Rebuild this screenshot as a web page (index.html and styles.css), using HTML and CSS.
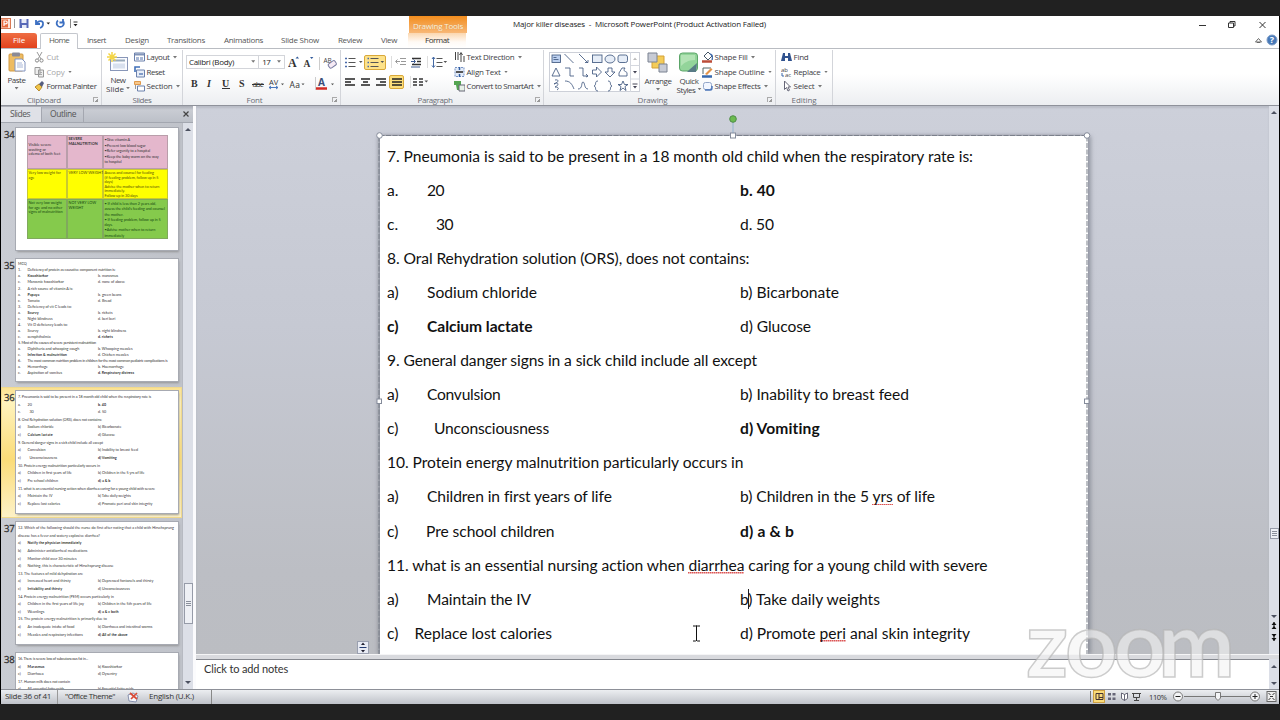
FILE: index.html
```html
<!DOCTYPE html>
<html lang="en">
<head>
<meta charset="utf-8">
<title>Major killer diseases - Microsoft PowerPoint</title>
<link rel="stylesheet" href="styles.css">
</head>
<body>
<div class="screen">
<div class="app">
  <header class="titlebar">
    <div class="quick">
      <svg width="78" height="15" viewBox="0 0 78 15"><rect x="0" y="2.500" width="9.500" height="10" fill="#fbe3d8" stroke="#d97a55"/><rect x="1" y="3.500" width="6" height="8" fill="#e8693c"/><path d="M3 10V5h1.800a1.300 1.300 0 0 1 0 2.800H3" fill="none" stroke="#fff" stroke-width="1.200"/><path d="M13.500 3v9" stroke="#999"/><path d="M18.500 3h9v9h-9z" fill="#5768b8"/><path d="M20.500 3h5v4h-5zM21 9h4.500v3H21z" fill="#e9ecf8"/><path d="M35 4v4h4M35.500 8c2-4 7-3.500 6.500 0c0 2-1.500 3.500-3 4" fill="none" stroke="#3d70c2" stroke-width="1.800"/><path d="M45.500 6.500h3.600l-1.800 2z" fill="#222"/><path d="M57 4.500a3.600 3.600 0 1 0 4.500 0M62 3v3.500h-3.500" fill="none" stroke="#3d70c2" stroke-width="1.800"/><path d="M69.500 3v9" stroke="#888"/><path d="M72.500 6h4" stroke="#333"/><path d="M72.500 8h4l-2 2.200z" fill="#222"/></svg>
    </div>
    <div class="context"><span data-w="50">Drawing Tools</span></div>
    <div class="doc"><span data-w="253">Major killer diseases  -  Microsoft PowerPoint (Product Activation Failed)</span></div>
    <svg class="winbtns" width="72" height="15" viewBox="0 0 72 15"><path d="M1 9.500h7" stroke="#333"/><path d="M30.500 7h5v4.500h-5zM32 6.800V5.500h5v4.500h-1.300" fill="none" stroke="#333"/><path d="M61.500 6l6 6m0-6l-6 6" stroke="#333"/></svg>
  </header>
  <nav class="tabs">
    <div class="file"><span data-w="12">File</span></div>
    <div class="tab on"><span data-w="20">Home</span></div>
    <div class="tab t1"><span data-w="19">Insert</span></div>
    <div class="tab t2"><span data-w="24">Design</span></div>
    <div class="tab t3"><span data-w="38">Transitions</span></div>
    <div class="tab t4"><span data-w="39">Animations</span></div>
    <div class="tab t5"><span data-w="38">Slide Show</span></div>
    <div class="tab t6"><span data-w="24">Review</span></div>
    <div class="tab t7"><span data-w="16">View</span></div>
    <div class="tab fmt"><span data-w="24">Format</span></div>
    <svg class="help" width="26" height="14" viewBox="0 0 26 14"><path d="M2.500 9L5.500 5.500L8.500 9zM4 9.500h3" fill="none" stroke="#666"/><circle cx="19" cy="7" r="5" fill="#4779b8" stroke="#7d9cc6"/><text x="16.800" y="10.300" font-size="9" font-weight="bold" fill="#fff">?</text></svg>
  </nav>
  <section class="ribbon">
    <div class="group g1">
      <div class="gbody">
        <div class="big paste"><svg width="20" height="20" viewBox="0 0 20 20"><rect x="2" y="2" width="14" height="17" rx="1" fill="#eebc62" stroke="#d29a43"/><rect x="5" y="0.500" width="8" height="4" rx="1" fill="#8a8a96"/><path d="M8 7h7l3 3v9H8z" fill="#fff" stroke="#8294c0"/><path d="M10 11h5M10 13h6M10 15h6" stroke="#aab8d8"/></svg><span data-w="18">Paste</span><i class="dd"></i></div>
        <div class="rows">
          <div class="row off"><svg width="11" height="12" viewBox="0 0 11 12"><path d="M3 1l4 7M8 1L4 8" stroke="#999"/><circle cx="3" cy="9.500" r="1.600" fill="none" stroke="#888"/><circle cx="7.500" cy="9.500" r="1.600" fill="none" stroke="#888"/></svg><span data-w="12">Cut</span></div>
          <div class="row off"><svg width="11" height="12" viewBox="0 0 11 12"><path d="M1 1.500h5v7H1zM4.500 4h5v7h-5z" fill="#eee" stroke="#999"/><path d="M6 6.500h2M6 8.500h2" stroke="#aaa"/></svg><span data-w="18">Copy</span><i class="dd"></i></div>
          <div class="row"><svg width="11" height="12" viewBox="0 0 11 12"><path d="M1 7l4-3 3 3-3 4z" fill="#f0c54a" stroke="#b98b2d"/><path d="M5 4l3-3 2 2-2 4z" fill="#555e80"/></svg><span data-w="50">Format Painter</span></div>
        </div>
      </div>
      <div class="glabel"><span data-w="34">Clipboard</span></div><b class="launch"></b>
    </div>
    <div class="group g2">
      <div class="gbody">
        <div class="big new"><svg width="22" height="20" viewBox="0 0 22 20"><rect x="3.500" y="5.500" width="17" height="13" fill="#fafbff" stroke="#8896b8"/><path d="M6 8.500h12" stroke="#9ab" stroke-width="2"/><rect x="6" y="11.500" width="12" height="5" fill="#d8e0ee"/><path d="M5 0v10M0 5h10M1.500 1.500l7 7M8.500 1.500l-7 7" stroke="#f4d545" stroke-width="1.500"/></svg><span data-w="15">New</span><div class="two"><span data-w="18">Slide</span><i class="dd"></i></div></div>
        <div class="rows">
          <div class="row"><svg width="11" height="12" viewBox="0 0 11 12"><path d="M.5 2h10v8H.5z" fill="#fff" stroke="#6b80ac"/><path d="M1 3.500h9" stroke="#8294b8" stroke-width="2"/><path d="M2 6h3v3H2zM6 6h3v3H6z" fill="#a9b8d6"/></svg><span data-w="23">Layout</span><i class="dd"></i></div>
          <div class="row"><svg width="11" height="12" viewBox="0 0 11 12"><path d="M2.500 4h8v7h-8z" fill="#e7edf8" stroke="#6b80ac"/><path d="M1 6V1h5" fill="none" stroke="#3f6fb8" stroke-width="1.600"/><path d="M5 7h4v2H5z" fill="#819bc8"/></svg><span data-w="18">Reset</span></div>
          <div class="row"><svg width="11" height="12" viewBox="0 0 11 12"><path d="M.5 1.500h6v3h-6z" fill="#f7c78a" stroke="#e0994b"/><path d="M3.500 6h7v5h-7z" fill="#fff" stroke="#6b80ac"/><path d="M1.500 5v4" stroke="#999"/></svg><span data-w="26">Section</span><i class="dd"></i></div>
        </div>
      </div>
      <div class="glabel"><span data-w="19">Slides</span></div>
    </div>
    <div class="group g3">
      <div class="fontline">
        <div class="combo c1"><span data-w="45">Calibri (Body)</span><i class="dd"></i></div>
        <div class="combo c2"><span data-w="8">17</span><i class="dd"></i></div>
        <svg width="52" height="16" viewBox="0 0 52 16"><g font-family="Liberation Serif" font-weight="bold" fill="#333"><text x="0" y="12" font-size="12">A</text><text x="15.500" y="12" font-size="9.500">A</text></g><path d="M7.500 3.500l1.800-2 1.800 2zM22 2h3.400l-1.700 2z" fill="#335b9b"/><path d="M31.500 2v13" stroke="#ccc"/><text x="35.500" y="7.500" font-size="6.500" fill="#444">AB</text><rect x="40" y="7" width="8" height="5" rx="1.500" transform="rotate(-35 44 9)" fill="#f6eaf5" stroke="#777ba0"/></svg>
      </div>
      <div class="fontbuttons">
        <svg width="152" height="18" viewBox="0 0 152 18"><g font-family="Liberation Serif" font-weight="bold" font-size="10" fill="#333"><text x="4" y="11">B</text><text x="20" y="11" font-style="italic">I</text><text x="35" y="11">U</text><text x="52" y="11">S</text></g><path d="M35 12.500h8" stroke="#333"/><text x="65.500" y="11" font-size="8" fill="#333" textLength="11">abc</text><path d="M65 8.500h12" stroke="#333"/><text x="82" y="8.500" font-size="7.500" fill="#333">AV</text><path d="M82 11.500h9M84 10l-2 1.500 2 1.500M89 10l2 1.500-2 1.500" fill="none" stroke="#4a78bd"/><path d="M94 7.500h3l-1.500 1.800zM114.500 7.500h3l-1.500 1.800zM144 7.500h3l-1.500 1.800z" fill="#555"/><text x="102.500" y="11.500" font-size="8.500" fill="#333" textLength="10.500">Aa</text><path d="M128.500 1v13" stroke="#ccc"/><text x="131" y="10" font-size="10" font-weight="bold" fill="#394f7a">A</text><path d="M129 12.500h11" stroke="#d22c24" stroke-width="2.500"/></svg>
      </div>
      <div class="glabel"><span data-w="16">Font</span></div><b class="launch"></b>
    </div>
    <div class="group g4">
      <div class="gbody">
        <svg class="para" width="108" height="44" viewBox="0 0 108 44">
          <rect x="21.500" y="5.500" width="21" height="14" rx="1.500" fill="#fde28a" stroke="#d9a83a"/><rect x="46.500" y="25.500" width="14" height="13" rx="1.500" fill="#fddf7c" stroke="#d9a83a"/>
          <path d="M5.500 8.500h7M5.500 12.500h7M5.500 16.500h7M27.500 8.500h8M27.500 12.500h8M27.500 16.500h8" stroke="#555"/><path d="M2 8.500h2M2 12.500h2M2 16.500h2M24.500 8.500h1.500M24.500 12.500h1.500M24.500 16.500h1.500" stroke="#4a6aaa" stroke-width="1.500"/>
          <path d="M16 11h3.600l-1.800 2zM37.500 11h3.600l-1.800 2zM100.500 11h3.600l-1.800 2zM81.500 30.500h3.600l-1.800 2z" fill="#555"/>
          <path d="M57 8.500h6M58 11.500h5M57 14.500h6M53 11.500h4M54.500 9.500l-2 2 2 2" fill="none" stroke="#999"/><path d="M69 8.500h9M74 11.500h4M69 14.500h9" stroke="#333" stroke-width="1.500"/><path d="M68 11.500h4M70.500 9.500l2 2-2 2M68 17h9" fill="none" stroke="#3d5a92"/>
          <path d="M48.500 6v12M84.500 6v12M67.500 26v12" stroke="#ddd"/><path d="M93.500 8.500h6M93.500 12.500h6M93.500 16.500h6" stroke="#555"/><path d="M90.500 7v10M89 9l1.500-2L92 9M89 15.500l1.500 2 1.500-2" fill="none" stroke="#456aa5"/>
          <path d="M2 29h10M2 32h6M2 35h10M18 29h9M20 32h5M18 35h9M33 29h10M37 32h6M33 35h10M49 29h10M49 32h10M49 35h10" stroke="#222" stroke-width="1.600"/><path d="M70 29h4M76 29h4M70 32h4M76 32h4M70 35h4M76 35h4" stroke="#333" stroke-width="1.500"/></svg>
        <div class="rows">
          <div class="row"><svg width="11" height="12" viewBox="0 0 11 12"><path d="M1.500 1v8M4 1v8M10 5v6" stroke="#444"/><path d="M7 11V2M5.500 4L7 1.500 8.500 4" fill="none" stroke="#444"/></svg><span data-w="48">Text Direction</span><i class="dd"></i></div>
          <div class="row"><svg width="11" height="12" viewBox="0 0 11 12"><path d="M1 1.500h9v9H1z" fill="#e4ecf9" stroke="#7793c4" stroke-dasharray="2 1"/><path d="M2 6h7" stroke="#555" stroke-width="2"/><path d="M5.500 1v3M5.500 8v3" stroke="#2f5da4" stroke-width="1.500"/></svg><span data-w="34">Align Text</span><i class="dd"></i></div>
          <div class="row"><svg width="11" height="12" viewBox="0 0 11 12"><path d="M0 1h7v4H0zM2 5h4l4 5H3z" fill="#54a552"/><path d="M5 5h6v6H5z" fill="#e7f1e7" stroke="#667"/></svg><span data-w="67">Convert to SmartArt</span><i class="dd"></i></div>
        </div>
      </div>
      <div class="glabel"><span data-w="35">Paragraph</span></div><b class="launch"></b>
    </div>
    <div class="group g5">
      <div class="gbody">
        <svg class="gallery" width="92" height="40" viewBox="0 0 92 40"><rect x=".5" y=".5" width="90" height="39" fill="#fff" stroke="#cdd0d8"/><path d="M81.500 0v40M81.500 13.500h9M81.500 27h9" stroke="#d5d8df"/>
          <g fill="none" stroke="#41597f" stroke-width=".85"><rect x="3" y="3" width="8.500" height="7.500" fill="#bcd0ef"/><path d="M4.500 5.500h3M4.500 7.500h5M15.500 2l9 9M30 2l9 9M36 10.500h3V8"/><rect x="43.500" y="3" width="9.500" height="7.500" fill="#e6edf7"/><ellipse cx="61" cy="7" rx="5" ry="4" fill="#e6edf7"/><rect x="69" y="3" width="9.500" height="7.500" rx="2" fill="#e6edf7"/><path d="M3 24l4-8 4 8zM16 16h5v8h4M30 16h4v8h5l-2-2m2 2l-2 1M43.500 18h4v-3l5 5-5 5v-3h-4zM59 16h4v4h3l-5 5-5-5h3zM70 24v-3l3-5h3c-3 4 2 3 2 5v3zM6 28c5-1 3 3-1 4 4-3 6 1 1 3 4 0 4 2 2 3M16 29c5 0 7 3 9 8M29 37c5 0 3-7 5-7s1 7 5 7M49 29c-4 0-1 4-4 5 3 1 0 5 4 5M59 29c4 0 1 4 4 5-3 1 0 5-4 5M74 29l1.500 3.500h3.500l-3 2 1 4-3-2.500-3 2.500 1-4-3-2h3.500z"/></g><path d="M84 19h4l-2 2.500zM84 34h4l-2 2.500z" fill="#445"/><path d="M83.500 32h5" stroke="#445"/><path d="M84 8h4l-2-2.500z" fill="#bbb"/></svg>
        <div class="big arr"><svg width="22" height="21" viewBox="0 0 22 21"><path d="M5 4h12v12H5z" fill="#f4cc58" stroke="#d5a136"/><path d="M1 1h9v9H1zM12 12h8v8h-8z" fill="#c7cbd5" stroke="#7b8291"/></svg><span data-w="27">Arrange</span><i class="dd"></i></div>
        <div class="big qs"><svg width="20" height="21" viewBox="0 0 20 21"><rect x=".5" y="1" width="18" height="18" rx="3" fill="#93d49a" stroke="#5ba568"/><path d="M2 3h14v5C9 8 5 11 2 14z" fill="#b3e3b5"/><path d="M18 11l-8 7-2 2h9z" fill="#587b86"/></svg><span data-w="19">Quick</span><div class="two"><span data-w="19">Styles</span><i class="dd"></i></div></div>
        <div class="rows">
          <div class="row"><svg width="11" height="12" viewBox="0 0 11 12"><path d="M2 5l4-4 4 4-4 4z" fill="#fff" stroke="#456"/><path d="M8 3c3 1 3 3 2 6" fill="none" stroke="#456fae" stroke-width="1.500"/><path d="M0 10.500h10" stroke="#bb4c39" stroke-width="2.500"/></svg><span data-w="33">Shape Fill</span><i class="dd"></i></div>
          <div class="row"><svg width="11" height="12" viewBox="0 0 11 12"><path d="M1 8V2h8" fill="none" stroke="#566"/><path d="M3 8l6-6 1.500 1.500L5 9z" fill="#e59448"/><path d="M0 10.500h10" stroke="#3768ad" stroke-width="2.500"/></svg><span data-w="50">Shape Outline</span><i class="dd"></i></div>
          <div class="row"><svg width="11" height="12" viewBox="0 0 11 12"><rect x="1.500" y="2.500" width="8" height="7" rx="2" fill="#f2f6ff" stroke="#92a5c8"/><path d="M3 10h5c2 0 2-1 2-4" fill="none" stroke="#4a74b8" stroke-width="1.500"/></svg><span data-w="46">Shape Effects</span><i class="dd"></i></div>
        </div>
      </div>
      <div class="glabel"><span data-w="30">Drawing</span></div><b class="launch"></b>
    </div>
    <div class="group g6">
      <div class="gbody"><div class="rows">
        <div class="row"><svg width="11" height="12" viewBox="0 0 11 12"><path d="M2 2h2v3h3V2h2l2 8H7V7H4v3H0z" fill="#31538f"/></svg><span data-w="15">Find</span></div>
        <div class="row"><svg width="11" height="12" viewBox="0 0 11 12"><text x="0" y="5.500" font-size="6" fill="#444">ab</text><text x="4" y="11" font-size="6" fill="#444">ac</text><path d="M1 7v3h2" fill="none" stroke="#3b67a8"/></svg><span data-w="27">Replace</span><i class="dd"></i></div>
        <div class="row"><svg width="11" height="12" viewBox="0 0 11 12"><path d="M3.500 1v8.500l2-2 1.500 3.500 1.500-.8L7 7h2.500z" fill="#fff" stroke="#667"/></svg><span data-w="21">Select</span><i class="dd"></i></div>
      </div></div>
      <div class="glabel"><span data-w="25">Editing</span></div>
    </div>
  </section>
  <main class="work">
    <aside class="pane">
      <div class="panetabs"><div class="ptab pon"><span data-w="20">Slides</span></div><div class="ptab"><span data-w="26">Outline</span></div><svg width="8" height="8" viewBox="0 0 8 8"><path d="M1.500 1.500l5 5M6.500 1.500l-5 5" stroke="#444" stroke-width="1.200"/></svg></div>
      <div class="panebody">
        <div class="list" id="list"></div>
        <div class="vbar"><i class="up"></i><div class="thumbgrip"></div><i class="down"></i></div>
      </div>
    </aside>
    <div class="stage">
      <div class="canvas">
        <div class="desk">
          <svg class="fit" width="12" height="13" viewBox="0 0 12 13"><rect x=".5" y=".5" width="11" height="12" fill="#e8ebf4" stroke="#9aa0b0"/><path d="M2.500 6.500h7" stroke="#223a70"/><path d="M6 1.500l2 2.500H4zM6 11.500L4 9h4z" fill="#223"/></svg>
          <article class="slide">
            <p><span data-w="586">7. Pneumonia is said to be present in a 18 month old child when the respiratory rate is:</span></p>
            <p class="q"><span>a.</span><span data-w="17">20</span><b data-w="35">b. 40</b></p>
            <p class="q"><span>c.</span><span class="in9" data-w="17">30</span><span data-w="34">d. 50</span></p>
            <p><span data-w="363">8. Oral Rehydration solution (ORS), does not contains:</span></p>
            <p class="q"><span>a)</span><span data-w="110">Sodium chloride</span><span data-w="99">b) Bicarbonate</span></p>
            <p class="q"><b>c)</b><b data-w="105.500">Calcium lactate</b><span data-w="71">d) Glucose</span></p>
            <p><span data-w="370">9. General danger signs in a sick child include all except</span></p>
            <p class="q"><span>a)</span><span data-w="73.500">Convulsion</span><span data-w="169">b) Inability to breast feed</span></p>
            <p class="q"><span>c)</span><span class="in7" data-w="115">Unconsciousness</span><b data-w="80">d) Vomiting</b></p>
            <p><span data-w="357">10. Protein energy malnutrition particularly occurs in</span></p>
            <p class="q"><span>a)</span><span data-w="184.500">Children in first years of life</span><span data-w="195">b) Children in the 5 <u>yrs</u> of life</span></p>
            <p class="q"><span>c)</span><span class="pre" data-w="128.500">Pre school children</span><b data-w="54">d) a &amp; b</b></p>
            <p><span data-w="601">11. what is an essential nursing action when <u>diarrhea</u> caring for a young child with severe</span></p>
            <p class="q"><span>a)</span><span data-w="104">Maintain the IV</span><span data-w="140">b) Take daily weights</span></p>
            <p class="q"><span>c)</span><span class="rep" data-w="137.500">Replace lost calories</span><span data-w="230">d) Promote <u>peri</u> anal skin integrity</span></p>
            <svg class="sel" width="716" height="545" viewBox="0 0 716 545"><path d="M4 545V25.500h708V545" fill="none" stroke="#7b808b" stroke-dasharray="5 1.500"/><path d="M358 12v13" stroke="#93b4d0"/><circle cx="358" cy="9" r="3.300" fill="#6cbb50" stroke="#4f8d48"/><g fill="#fff" stroke="#858c9b"><circle cx="4.500" cy="25.500" r="2.800"/><circle cx="712" cy="25.500" r="2.800"/><rect x="355.500" y="23" width="5" height="5"/><rect x="2" y="289" width="4.500" height="4.500"/><rect x="709.500" y="289" width="4.500" height="4.500"/></g><path d="M373.500 479v20" stroke="#222"/><path d="M318 516h2.500l1-.5 1 .5h2.500M321.500 516v15M318 531h2.500l1-.5 1 .5h2.500" fill="none" stroke="#111"/></svg>
          </article>
        </div>
        <div class="vbar main"><i class="up"></i><div class="thumbgrip"></div><i class="down"></i><svg width="10" height="26" viewBox="0 0 10 26"><path d="M2.500 7l2.500-3 2.500 3zM2.500 11L5 8l2.500 3zM2.500 16h5L5 19zM2.500 20h5L5 23z" fill="#111"/><path d="M5 4v7M5 16v7" stroke="#111"/></svg></div>
      </div>
      <div class="notes"><span data-w="84">Click to add notes</span><div class="vbar nb"><i class="up"></i><i class="down"></i></div></div>
      <svg class="mark" width="220" height="70" viewBox="0 0 220 70"><text x="6 45 93.500 138" y="57.500">zoom</text></svg>
    </div>
  </main>
  <footer class="status">
    <div class="s1"><span data-w="46">Slide 36 of 41</span></div>
    <div class="s2"><span data-w="50">"Office Theme"</span></div>
    <svg width="12" height="12" viewBox="0 0 12 12"><path d="M1 4l5-2 5 3-2 6-7-1z" fill="#f5f6fb" stroke="#8791ad"/><path d="M3 2l7 6M10 2L4 8" stroke="#d84b37" stroke-width="1.700"/></svg>
    <div class="s3"><span data-w="45">English (U.K.)</span></div>
    <svg class="views" width="189" height="15" viewBox="0 0 189 15"><path d="M.5 2v11" stroke="#777"/><rect x="3.500" y="1.500" width="11" height="12" fill="#fbdc7a" stroke="#cda043"/><path d="M6 4.500h7v6H6zM9 4.500v6M9 8.500h4" fill="none" stroke="#433"/><path d="M18 4h3v2.500h-3zM22.500 4h3v2.500h-3zM18 8.500h3V11h-3zM22.500 8.500h3V11h-3z" fill="#667"/><path d="M31.500 4l3 1.500v6l-3-2zM37.500 4l-3 1.500v6l3-2z" fill="#fff" stroke="#667"/><path d="M42 4.500h9M43.500 5v3.500h6V5M46.500 9v2.500M44 11.500h5" fill="none" stroke="#444"/><text x="59" y="10.500" font-size="7.500" fill="#333" textLength="18">110%</text><g fill="#f3f4f6" stroke="#777"><path d="M94 7.500h66"/><circle cx="88" cy="7.500" r="4.500"/><circle cx="165" cy="7.500" r="4.500"/><path d="M125.500 3.500h5V9l-2.500 2.500L125.500 9z"/></g><path d="M85.500 7.500h5M162.500 7.500h5M165 5v5" stroke="#222"/><rect x="177" y="2.500" width="9" height="10" fill="#eee" stroke="#666"/><path d="M178.500 4l2 2M184.500 4l-2 2M178.500 11l2-2M184.500 11l-2-2M180 7.500h3" stroke="#333"/></svg>
  </footer>
</div>
</div>
<script src="script.js"></script>
</body>
</html>
```
FILE: styles.css
```css
* { box-sizing: border-box; }
body { margin: 0; background: #212121; font-family: "Open Sans", "Noto Sans", sans-serif; font-size: 8px; color: #444; }
svg { display: block; flex: none; }
[data-w] { display: inline-block; white-space: pre; flex: none; }
.screen { height: 720px; padding: 16px 1px 16px 1px; background: linear-gradient(#212121 16px, #000 16px, #000 704px, #212121 704px); overflow: hidden; }
.app { display: flex; flex-direction: column; height: 688px; background: #fff; overflow: hidden; }

.titlebar { display: flex; height: 17px; }
.quick { width: 408px; overflow: hidden; }
.context { width: 58px; padding: 4px 0 0 4px; line-height: 11px; color: #fff3dc; background: linear-gradient(#f28d1e, #f8b877); text-shadow: 0 0 1px #c6905a; }
.doc { width: 727px; padding-left: 46px; line-height: 16px; color: #222; }
.winbtns { margin-left: 4px; }

.tabs { display: flex; height: 16px; border-bottom: 1px solid #b9bcc2; line-height: 14px; color: #555; }
.file { width: 36px; padding-left: 12px; color: #fff; background: linear-gradient(#ee6e44, #e2421c); border-radius: 0 3px 0 0; }
.tab.on { width: 38px; margin: 0 9px 0 3px; padding-left: 8px; height: 16px; background: #fff; border: 1px solid #c4c7cd; border-bottom: 0; border-radius: 2px 2px 0 0; line-height: 12px; }
.t1 { width: 38px; } .t2 { width: 42px; } .t3 { width: 57px; } .t4 { width: 57px; } .t5 { width: 57px; } .t6 { width: 43px; } .t7 { width: 27px; }
.tab.fmt { width: 58px; padding-left: 17px; background: linear-gradient(#fbd7b0, #fffaf5 60%, #fff); color: #333; }
.help { margin-left: auto; }

.ribbon { display: flex; height: 57px; padding-top: 1px; background: linear-gradient(#fff 45%, #eceef1); border-bottom: 1px solid #8f929b; }
.group { position: relative; display: flex; flex-direction: column; height: 55px; border-right: 1px solid #d3d5da; }
.g1 { width: 101px; } .g2 { width: 81px; } .g3 { width: 158px; } .g4 { width: 203px; } .g5 { width: 232px; } .g6 { width: 57px; }
.gbody { display: flex; height: 45px; }
.glabel { text-align: center; line-height: 9px; color: #6a6d74; padding-right: 14px; }
.g2 .glabel, .g6 .glabel { padding-right: 0; }
.launch { position: absolute; right: 3px; bottom: 3px; width: 5px; height: 5px; border-top: 1px solid #aaa; border-left: 1px solid #aaa; background: linear-gradient(135deg, transparent 60%, #999 60%); }
.rows { display: flex; flex-direction: column; }
.row { display: flex; align-items: center; height: 14.500px; gap: 1.500px; color: #3d3d44; line-height: 11px; }
.row span { margin-top: -1px; }
.off { color: #a5a5a8; }
.dd { flex: none; width: 4px; height: 2.500px; margin-left: 2px; background: #777; clip-path: polygon(0 0, 100% 0, 50% 100%); }
.big { display: flex; flex-direction: column; align-items: center; padding-top: 2px; line-height: 9px; color: #3d3d44; flex: none; }
.big > .dd { margin: 3px 0 0; }
.two { display: flex; align-items: center; margin-top: -.500px; }
.paste { width: 31px; }
.paste span { margin-top: 3px; }
.paste + .rows { padding-left: 2px; }
.new { width: 31px; padding-left: 1px; }
.new > span { margin-top: 3px; }
.g2 .rows { padding-left: 1px; }
.fontline { display: flex; height: 25px; padding: 5px 0 0 3px; }
.combo { display: flex; align-items: center; justify-content: space-between; height: 14px; border: 1px solid #d3d5da; background: #fff; padding: 0 3px 1px; color: #222; line-height: 10px; }
.c1 { width: 73px; border-right: 0; padding-left: 2px; } .c2 { width: 27px; margin-right: 3px; }
.c1 .dd, .c2 .dd { margin: 0; }
.fontbuttons { height: 20px; padding: 1px 0 0 4px; }
.g4 .rows { padding-left: 3px; }
.para { margin-left: 2px; }
.g5 .gbody { padding-left: 5px; }
.gallery { margin-top: 2px; }
.arr { width: 34px; } .arr span { margin-top: 3px; }
.qs { width: 28px; } .qs > span { margin-top: 3px; }
.g5 .rows { margin-left: -1px; }
.g6 .gbody { padding-left: 5px; }

.work { display: flex; height: 583px; }
.pane { display: flex; flex-direction: column; width: 195px; border-right: 3px solid #fbfbfd; background: #c4c7cf; box-shadow: inset -1px 0 #a6a9b2; }
.panetabs { display: flex; align-items: center; height: 17px; background: linear-gradient(#a8abb4, #c9ccd3 4px, #bcc0c8); border-bottom: 1px solid #a3a7b0; color: #555; }
.ptab { width: 42px; height: 15px; line-height: 14px; padding-left: 8px; border-right: 1px solid #a4a7b0; font-size: 8.500px; }
.ptab.pon { width: 41px; padding-left: 9px; background: #dfe1e7; }
.panetabs svg { margin-left: 98px; }
.panebody { display: flex; height: 566px; }
.list { width: 181px; padding-top: 1.500px; overflow: hidden; background: linear-gradient(90deg, #c9ccd3, #c0c3ca); }
.item { display: flex; height: 131.300px; padding-top: 3.500px; flex: none; }
.item.cur { background: linear-gradient(#fbe08c, #fff3bd 12%, #fbdc78 55%, #fdf2c8); box-shadow: inset 0 0 0 1px #f0d98d; }
.num { width: 15px; padding-left: 3px; font-size: 9.500px; line-height: 13px; color: #333; flex: none; -webkit-text-stroke: .3px #333; letter-spacing: -.3px; }
.thumb { width: 162px; height: 122px; background: #fff; outline: 1px solid #a7aab2; box-shadow: 1px 2px 2px #888c; overflow: hidden; flex: none; font-family: Lato, sans-serif; font-size: 3.700px; color: #333; display: flex; flex-direction: column; }
.tl { display: flex; align-items: center; padding-left: 2px; white-space: pre; flex: none; }
.tl .k { width: 9.500px; flex: none; } .tl .m { width: 70.500px; flex: none; }
.tbl { display: grid; grid-template-columns: 40px 36px 65px; grid-template-rows: 34px 30px 40px; margin: 7px 0 0 10.500px; font-size: 3.800px; line-height: 4.600px; }
.tbl div { border: .500px solid #7776; padding: 1px; white-space: pre; }
.tbl div:nth-child(3n) { padding-right: 0; letter-spacing: -.050px; }
.tbl div:nth-child(3) { line-height: 5.600px; }
.tbl div:nth-child(9) { line-height: 5.300px; }
.pk { background: #e4b7cc; } .yl { background: #ffff00; color: #55500a; } .gn { background: #85ca4c; color: #174a12; }
.tbl .pk:first-child { padding-top: 7px; }
.vbar { display: flex; flex-direction: column; align-items: center; width: 11px; background: #dcdfe7; padding: 5px 0; flex: none; }
.up, .down { width: 6px; height: 3px; background: #4c5160; clip-path: polygon(50% 0, 100% 100%, 0 100%); }
.down { transform: rotate(180deg); }
.pane .vbar { border-left: 1px solid #b7bac2; }
.pane .down { margin-top: auto; }
.thumbgrip { width: 9px; height: 41px; margin-top: 452px; border: 1px solid #969ba8; background: repeating-linear-gradient(#8a8f9b 0 1px, #eef0f5 1px 2px) center / 5px 5px no-repeat, #eef0f5; }

.stage { position: relative; display: flex; flex-direction: column; width: 1083px; }
.canvas { display: flex; height: 549px; border-bottom: 1px solid #f5f5f6; }
.desk { display: flex; width: 1073px; background: linear-gradient(#cdd0da, #c6c9d3 40%, #bcbec4 85%, #bbbdc2); box-shadow: inset 0 2px 2px #a9acb688; }
.fit { align-self: flex-end; margin: 0 11px 0 161px; }
.slide { position: relative; width: 708px; margin-top: 30px; padding: 3px 0 0 7px; background: #fff; box-shadow: 3px 0 4px #777b8799, -2px 0 4px #777b87aa; font-family: Lato, "Open Sans", sans-serif; font-size: 15.600px; color: #111; clip-path: inset(-30px -12px 0 -12px); }
.slide p { margin: 0; height: 34.060px; line-height: 34px; }
.slide .q { display: grid; grid-template-columns: 40px 313px 1fr; justify-items: start; }
.in9 { margin-left: 9px; } .in7 { margin-left: 7px; } .pre { margin-left: -1px; } .rep { margin-left: -12.500px; }
.slide u { text-decoration: none; padding-bottom: 0; background: repeating-linear-gradient(90deg, #d55 0 1px, #e9a0a0 1px 2px) 0 100% / 100% 1.500px no-repeat; }
.sel { position: absolute; left: -5px; top: -26px; }
.main { width: 10px; }
.main .thumbgrip { width: 9px; height: 11px; margin-top: 414px; }
.main .down { margin-top: 76px; }
.notes { display: flex; justify-content: space-between; height: 34px; border-top: 4px solid #d9dade; box-shadow: inset 0 1px #85888f; padding-left: 8px; font-family: Lato, sans-serif; font-size: 11px; line-height: 19px; color: #333; background: #fff; }
.nb { width: 10px; justify-content: space-between; padding: 6px 0 4px; }
.mark { position: absolute; left: 824px; top: 513px; font-family: Lato, sans-serif; font-weight: bold; font-size: 92px; fill: #f4f4f499; stroke: #b4b4b4aa; stroke-width: 1.500px; }

.status { display: flex; align-items: center; height: 15px; border-top: 1px solid #8d9098; background: linear-gradient(#eceef1, #bfc2c9); line-height: 12px; color: #333; }
.status div { padding-bottom: 2px; }
.s1 { width: 57px; padding-left: 4px; border-right: 1px solid #999; }
.s2 { width: 69px; padding-left: 7px; }
.s3 { width: 71px; margin-left: 2px; padding-left: 8px; border-right: 1px solid #888; }
.views { margin: -2px 0 0 auto; }
```
FILE: script.js
```js
// Slide previews. A row is "key|left|right"; "*" marks bold text, "@n" the drawn width in px.
const previews = [
  { n: 34 },
  { n: 35, pitch: 6.05, top: 1.5, rows: ["MCQ", "1.|Deficiency of protein as causative component nutrition is:@88", "a.|*Kwashiorkor|b. marasmus", "c.|Marasmic kwashiorkor|d. none of above", "2.|A rich source of vitamin A is:", "a.|*Papaya|b. green beans", "c.|Tomato|d. Bread", "3.|Deficiency of vit C leads to:", "a.|*Scurvy|b. rickets", "c.|Night blindness|d. beri beri", "4.|Vit D deficiency leads to:", "a.|Scurvy|b. night blindness", "c.|xerophthalmia|*d. rickets", "5. Most of the causes of severe persistent malnutrition@78|", "a.|Diphtheria and whooping cough|b. Whooping measles", "c.|*Infection & malnutrition|d. Chicken measles", "6.|The most common nutrition problem in children for the most common pediatric complications is@140", "a.|Hemorrhage|b. Haemorrhage", "c.|Aspiration of vomitus|*d. Respiratory distress"] },
  { n: 36, pitch: 7.65, top: 2, cur: true, rows: ["7. Pneumonia is said to be present in a 18 month old child when the respiratory rate is@133", "a.|20|*b. 40", "c.|  30|d. 50", "8. Oral Rehydration solution (ORS), does not contains:@84", "a)|Sodium chloride|b) Bicarbonate", "c)|*Calcium lactate|d) Glucose", "9. General danger signs in a sick child include all except@85", "a)|Convulsion|b) Inability to breast feed", "c)|  Unconsciousness|*d) Vomiting", "10. Protein energy malnutrition particularly occurs in@82", "a)|Children in first years of life|b) Children in the 5 yrs of life", "c)|Pre school children|*d) a & b", "11. what is an essential nursing action when diarrhea caring for a young child with severe@137", "a)|Maintain the IV|b) Take daily weights", "c)|Replace lost calories|d) Promote peri anal skin integrity"] },
  { n: 37, pitch: 7.6, top: 2, rows: ["12. Which of the following should the nurse do first after noting that a child with Hirschsprung@156", "disease has a fever and watery explosive diarrhea?@82", "a)|*Notify the physician immediately@54", "b)|Administer antidiarrheal medications@60", "c)|Monitor child over 30 minutes@49", "d)|Nothing, this is characteristic of Hirschsprung disease@86", "13. The features of mild dehydration are@65", "a)|Increased heart and thirsty|b) Depressed fontanels and thirsty", "c)|*Irritability and thirsty|d) Unconsciousness", "14. Protein energy malnutrition (PEM) occurs particularly in@96", "a)|Children in the first years of life joy|b) Children in the 5th years of life", "c)|Weanlings|*d) a & c both", "15. The protein energy malnutrition is primarily due to@89", "a)|An inadequate intake of food|b) Diarrhoea and intestinal worms", "c)|Measles and respiratory infections|*d) All of the above"] },
  { n: 38, pitch: 7.6, top: 1.5, rows: ["16. There is severe loss of subcutaneous fat in...@70", "a)|*Marasmus|b) Kwashiorkor", "c)|Diarrhoea|d) Dysentry", "17. Human milk does not contain@52", "a)|All essential fatty acids|b) Essential fatty acids"] }
];
const table = [
  ["pk", "Visible severe\nwasting or\nedema of both feet"], ["pk", "<b>SEVERE\nMALNUTRITION</b>"], ["pk", "•Give vitamin A\n•Prevent low blood sugar\n•Refer urgently to a hospital\n•Keep the baby warm on the way\nto hospital"],
  ["yl", "Very low weight for\nage"], ["yl", "VERY LOW WEIGHT"], ["yl", "Assess and counsel for feeding\n(if feeding problem, follow up in 5\ndays)\nAdvise the mother when to return\nimmediately.\nFollow up in 30 days"],
  ["gn", "Not very low weight\nfor age and no other\nsigns of malnutrition"], ["gn", "NOT VERY LOW\nWEIGHT"], ["gn", "• If child is less than 2 years old,\nassess the child's feeding and counsel\nthe mother.\n• If feeding problem, follow up in 5\ndays.\n•Advise mother when to return\nimmediately"]
];
function cell(text, cls) {
  const [label, width] = text.split("@");
  const bold = label.startsWith("*");
  const tag = bold ? "b" : "span";
  const body = (bold ? label.slice(1) : label).replace(/&/g, "&amp;");
  return `<span class="${cls}"><${tag}${width ? ` data-w="${width}"` : ""}>${body}</${tag}></span>`;
}
document.getElementById("list").innerHTML = previews.map(p => {
  const inner = p.rows
    ? p.rows.map(r => {
        const c = r.split("|");
        const cells = c.length === 1 ? cell(c[0], "") : cell(c[0], c[0].length < 4 ? "k" : "") + cell(c[1], "m") + (c[2] ? cell(c[2], "") : "");
        return `<div class="tl" style="height:${p.pitch}px">${cells}</div>`;
      }).join("")
    : `<div class="tbl">${table.map(([c, t]) => `<div class="${c}">${t}</div>`).join("")}</div>`;
  return `<div class="item${p.cur ? " cur" : ""}"><div class="num">${p.n}</div><div class="thumb" style="padding-top:${p.top || 0}px">${inner}</div></div>`;
}).join("");

// Letter-spacing that brings each label to its nominal width.
document.querySelectorAll("[data-w]").forEach(el => {
  const gap = parseFloat(el.dataset.w) - el.getBoundingClientRect().width;
  el.style.letterSpacing = (gap / el.textContent.length).toFixed(3) + "px";
});
```
